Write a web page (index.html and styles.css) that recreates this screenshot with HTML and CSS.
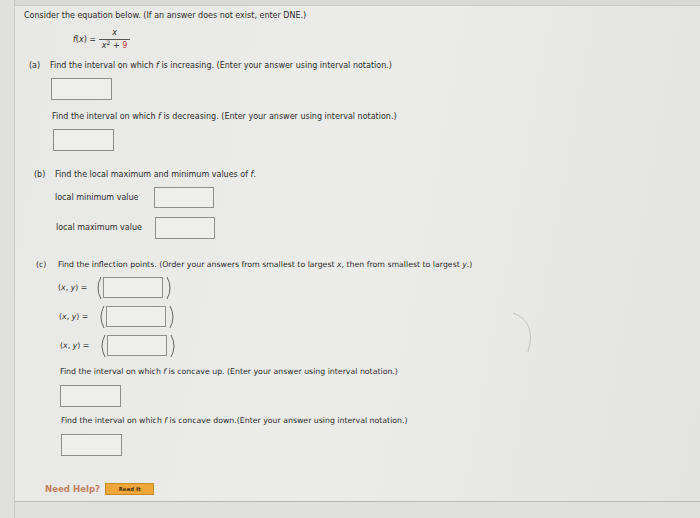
FILE: index.html
```html
<!DOCTYPE html>
<html>
<head>
<meta charset="utf-8">
<link rel="stylesheet" href="styles.css">
</head>
<body>
<div class="page">
  <div class="leftbar"></div>
  <div class="main">
    <div class="topbar"></div>
    <div class="panel">
      <p class="intro">Consider the equation below. (If an answer does not exist, enter DNE.)</p>
      <div class="formula">
        <span class="fx"><i>f</i>(<i>x</i>) =</span>
        <span class="frac">
          <span class="num"><i>x</i></span>
          <span class="bar"></span>
          <span class="den"><i>x</i><sup>2</sup> + <span class="rand">9</span></span>
        </span>
      </div>

      <div class="part part-a">
        <div class="head"><span class="lbl">(a)</span><span>Find the interval on which <i>f</i> is increasing. (Enter your answer using interval notation.)</span></div>
        <div class="body">
          <div class="box box-a1"></div>
          <p class="q q-a2">Find the interval on which <i>f</i> is decreasing. (Enter your answer using interval notation.)</p>
          <div class="box box-a2"></div>
        </div>
      </div>

      <div class="part part-b">
        <div class="head"><span class="lbl">(b)</span><span>Find the local maximum and minimum values of <i>f</i>.</span></div>
        <div class="body">
          <div class="row row-min"><span class="rlabel">local minimum value</span><div class="box"></div></div>
          <div class="row row-max"><span class="rlabel">local maximum value</span><div class="box tall"></div></div>
        </div>
      </div>

      <div class="part part-c">
        <div class="head"><span class="lbl">(c)</span><span>Find the inflection points. (Order your answers from smallest to largest <i>x</i>, then from smallest to largest <i>y</i>.)</span></div>
        <div class="body">
          <div class="pt pt1"><span class="xy">(<i>x</i>, <i>y</i>) =</span><svg class="paren" width="7" height="24" viewBox="0 0 7 24"><path d="M6 1 Q0 12 6 23" fill="none" stroke="#555" stroke-width="0.9"/></svg><div class="box"></div><svg class="paren" width="7" height="24" viewBox="0 0 7 24"><path d="M1 1 Q7 12 1 23" fill="none" stroke="#555" stroke-width="0.9"/></svg></div>
          <div class="pt pt2"><span class="xy">(<i>x</i>, <i>y</i>) =</span><svg class="paren" width="7" height="24" viewBox="0 0 7 24"><path d="M6 1 Q0 12 6 23" fill="none" stroke="#555" stroke-width="0.9"/></svg><div class="box"></div><svg class="paren" width="7" height="24" viewBox="0 0 7 24"><path d="M1 1 Q7 12 1 23" fill="none" stroke="#555" stroke-width="0.9"/></svg></div>
          <div class="pt pt3"><span class="xy">(<i>x</i>, <i>y</i>) =</span><svg class="paren" width="7" height="24" viewBox="0 0 7 24"><path d="M6 1 Q0 12 6 23" fill="none" stroke="#555" stroke-width="0.9"/></svg><div class="box"></div><svg class="paren" width="7" height="24" viewBox="0 0 7 24"><path d="M1 1 Q7 12 1 23" fill="none" stroke="#555" stroke-width="0.9"/></svg></div>
          <p class="q q-c1">Find the interval on which <i>f</i> is concave up. (Enter your answer using interval notation.)</p>
          <div class="box box-c1"></div>
          <p class="q q-c2">Find the interval on which <i>f</i> is concave down.(Enter your answer using interval notation.)</p>
          <div class="box box-c2"></div>
        </div>
      </div>

      <div class="help">
        <span class="need">Need Help?</span>
        <span class="readit">Read It</span>
      </div>
    </div>
    <div class="footer"></div>
  </div>
</div>
<svg class="scratch" width="40" height="50" viewBox="0 0 40 50"><path d="M3 3 Q27 12 18 42" fill="none" stroke="#b9b9b9" stroke-width="0.8"/></svg>
</body>
</html>
```

FILE: styles.css
```css
html, body {
  margin: 0;
  padding: 0;
}
body {
  position: relative;
  width: 700px;
  height: 518px;
  overflow: hidden;
  background: #e7e7e5;
  font-family: "DejaVu Sans", Verdana, sans-serif;
  font-size: 8px;
  line-height: 10px;
  color: #2c2c2c;
}
p { margin: 0; }
.page {
  display: flex;
  height: 518px;
}
.leftbar {
  width: 14px;
  background: #e0e0df;
  border-right: 1px solid #c9c9c8;
}
.main {
  flex: 1;
  display: flex;
  flex-direction: column;
}
.topbar {
  height: 5px;
  background: #d9d9d8;
  border-bottom: 1px solid #cacac9;
}
.panel {
  height: 496px;
  padding: 5px 0 0 9px;
  box-sizing: border-box;
  background: linear-gradient(100deg, #e8e8e6 0%, #ececea 50%, #e3e3e2 100%);
  border-bottom: 1px solid #b9b9b8;
}
.footer {
  flex: 1;
  background: #e0e0df;
}
.formula {
  display: flex;
  align-items: center;
  margin: 7px 0 0 49px;
  height: 23px;
}
.fx { margin-right: 3px; }
.frac {
  display: flex;
  flex-direction: column;
  align-items: center;
  width: 31px;
}
.num, .den { height: 10px; line-height: 10px; }
.bar {
  display: block;
  width: 31px;
  height: 0;
  border-top: 1px solid #555;
  margin: 1px 0 1px;
}
.den sup {
  font-size: 6px;
  line-height: 0;
  vertical-align: 3px;
}
.rand { color: #c0393b; }

.part { margin-left: 5px; }
.head { display: flex; }
.lbl { width: 21px; flex: none; }
.body { padding-left: 21px; }

.part-a { margin-top: 10px; }
.part-b { margin-top: 19px; margin-left: 10px; }
.part-c { margin-top: 21px; margin-left: 12px; font-size: 7.8px; }
.part-c .lbl { width: 22px; }
.part-c .body { padding-left: 22px; }

.box {
  width: 61px;
  height: 22px;
  box-sizing: border-box;
  border: 1px solid #8e8e8d;
  background: #eeeeec;
}
.box-a1 { margin: 7px 0 0 1px; }
.q-a2 { margin: 12px 0 0 2px; }
.box-a2 { margin: 7px 0 0 3px; }

.row {
  display: flex;
  align-items: center;
}
.rlabel { width: 99px; flex: none; }
.row .box { height: 21px; width: 60px; }
.row .box.tall { height: 22px; }
.row-min { margin-top: 7px; }
.row-max { margin-top: 9px; margin-left: 1px; }

.pt {
  display: flex;
  align-items: center;
  height: 21px;
}
.pt .xy { width: 37px; flex: none; }
.pt .paren { flex: none; }
.pt .box { width: 60px; height: 21px; margin: 0 3px 0 1px; }
.pt1 { margin-top: 7px; }
.pt2 { margin-top: 8px; margin-left: 1px; }
.pt2 .xy { width: 39px; }
.pt3 { margin-top: 8px; margin-left: 2px; }
.pt3 .xy { width: 39px; }

.q-c1 { margin: 11px 0 0 2px; }
.box-c1 { margin: 8px 0 0 2px; }
.q-c2 { margin: 9px 0 0 3px; }
.box-c2 { margin: 8px 0 0 3px; }

.help {
  display: flex;
  align-items: center;
  margin: 26px 0 0 21px;
  height: 13px;
}
.need {
  font-weight: bold;
  font-size: 8.6px;
  color: #c4805e;
  margin-right: 5px;
}
.readit {
  width: 49px;
  height: 12px;
  box-sizing: border-box;
  background: #f0a73a;
  border: 1px solid #c98a2c;
  font-size: 5.4px;
  font-weight: bold;
  line-height: 10px;
  text-align: center;
  color: #4a3010;
}
.scratch {
  position: absolute;
  left: 510px;
  top: 310px;
}
```
